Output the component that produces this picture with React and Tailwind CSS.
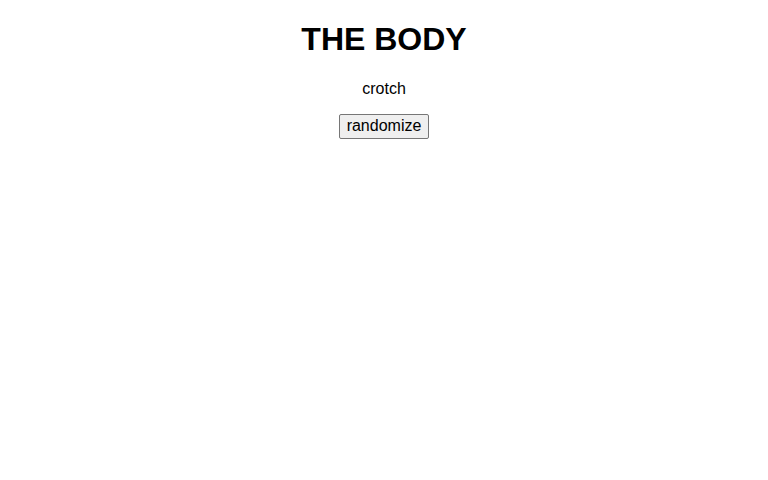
export default function App() {
  return (
    <div className="min-h-[480px] bg-white text-center text-black font-['Liberation_Sans',Arial,sans-serif]">
      <h1 className="pt-[21.44px] text-[32px] leading-[37px] font-bold">THE BODY</h1>
      <p className="mt-[21.44px] text-[16px] leading-[18.4px]">crotch</p>
      <div className="mt-[16px]">
        <button className="px-[7px] py-[2px] text-[16px] leading-[18.4px] bg-[#efefef] border border-[#767676] rounded-[2px] text-black">
          randomize
        </button>
      </div>
    </div>
  );
}
